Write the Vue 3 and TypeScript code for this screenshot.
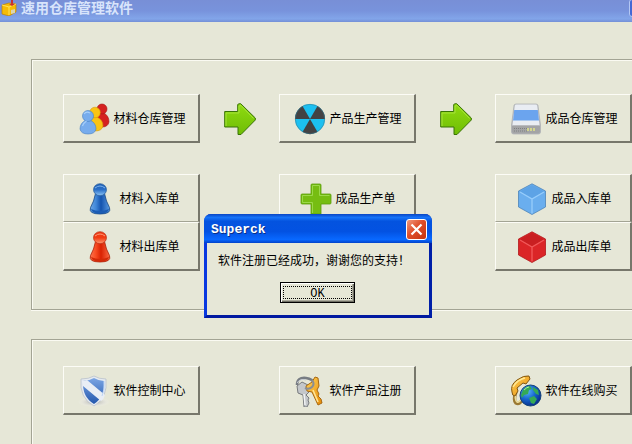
<script setup lang="ts">
import { ref } from 'vue'

interface Action {
  icon: string
  label: string
}

const stages: Action[] = [
  { icon: 'people', label: '材料仓库管理' },
  { icon: 'fan', label: '产品生产管理' },
  { icon: 'drive', label: '成品仓库管理' },
]

const documents: Action[][] = [
  [
    { icon: 'pawn-blue', label: '材料入库单' },
    { icon: 'pawn-red', label: '材料出库单' },
  ],
  [{ icon: 'plus', label: '成品生产单' }],
  [
    { icon: 'cube-blue', label: '成品入库单' },
    { icon: 'cube-red', label: '成品出库单' },
  ],
]

const tools: Action[] = [
  { icon: 'shield', label: '软件控制中心' },
  { icon: 'keys', label: '软件产品注册' },
  { icon: 'phone', label: '软件在线购买' },
]

const dialogOpen = ref(true)
</script>

<template>
  <div class="window">
    <svg class="sprites" aria-hidden="true">
      <defs>
        <linearGradient id="g-arrow" x1="0" y1="0" x2="0" y2="1">
          <stop offset="0" stop-color="#8fdb10" />
          <stop offset="1" stop-color="#6fbd05" />
        </linearGradient>
        <linearGradient id="g-blue" x1="0" y1="0" x2="1" y2="0">
          <stop offset="0" stop-color="#6aa6e6" />
          <stop offset="0.3" stop-color="#3f86d8" />
          <stop offset="0.55" stop-color="#1453ae" />
          <stop offset="1" stop-color="#5b9ce2" />
        </linearGradient>
        <linearGradient id="g-blue-head" x1="0" y1="0" x2="0" y2="1">
          <stop offset="0" stop-color="#1f5fb4" />
          <stop offset="0.5" stop-color="#2a6fc8" />
          <stop offset="1" stop-color="#8cc4f6" />
        </linearGradient>
        <linearGradient id="g-red" x1="0" y1="0" x2="1" y2="0">
          <stop offset="0" stop-color="#fb7450" />
          <stop offset="0.3" stop-color="#f84a20" />
          <stop offset="0.55" stop-color="#d92203" />
          <stop offset="1" stop-color="#fb6c45" />
        </linearGradient>
        <linearGradient id="g-red-head" x1="0" y1="0" x2="0" y2="1">
          <stop offset="0" stop-color="#ec3a16" />
          <stop offset="0.5" stop-color="#f23c12" />
          <stop offset="1" stop-color="#ff9a74" />
        </linearGradient>
        <linearGradient id="g-shield" x1="0" y1="0" x2="0" y2="1">
          <stop offset="0" stop-color="#7ba5e4" />
          <stop offset="1" stop-color="#2358ad" />
        </linearGradient>
        <linearGradient id="g-gold" x1="0" y1="0" x2="1" y2="1">
          <stop offset="0" stop-color="#ffd25a" />
          <stop offset="1" stop-color="#e58a06" />
        </linearGradient>
        <radialGradient id="g-globe" cx="0.35" cy="0.3" r="0.75">
          <stop offset="0" stop-color="#59b8f5" />
          <stop offset="0.5" stop-color="#1767cf" />
          <stop offset="1" stop-color="#062a86" />
        </radialGradient>
        <radialGradient id="g-shadow">
          <stop offset="0" stop-color="#b9bbb4" />
          <stop offset="0.6" stop-color="#deded6" />
          <stop offset="1" stop-color="#f1f1e9" stop-opacity="0" />
        </radialGradient>
      </defs>

      <symbol id="people" viewBox="0 0 32 32">
        <g stroke="#a31715" stroke-width=".6" fill="#d52220">
          <path d="M17 19q0-6 5-9h4q5 3 5 9q-1 5-7 5t-7-5z" />
          <circle cx="24" cy="6" r="5" />
        </g>
        <g stroke="#d39a06" stroke-width=".6" fill="#f9c414">
          <path d="M9 23q0-6 6-9h4q6 3 6 9q-1 5-8 5t-8-5z" />
          <circle cx="17" cy="9.500" r="5.300" />
        </g>
        <g stroke="#477fc1" stroke-width=".6" fill="#77aced">
          <path d="M2 26q0-6 6-9h4q6 3 6 9q-1 5-8 5t-8-5z" />
          <circle cx="10" cy="13" r="5.500" />
        </g>
        <path d="M6 11q2-3 6-1M4.500 23q1-3 4-5" stroke="#a7cffa" stroke-width="1.200" fill="none" />
      </symbol>

      <symbol id="fan" viewBox="0 0 32 32">
        <circle cx="16" cy="16" r="15" fill="#1cc0f1" />
        <g fill="#424244">
          <path d="M16 16L1 16A15 15 0 0 1 8.500 3z" />
          <path d="M16 16L23.500 3A15 15 0 0 1 31 16z" />
          <path d="M16 16L23.500 29A15 15 0 0 1 8.500 29z" />
        </g>
        <circle cx="16" cy="16" r="14.700" fill="none" stroke="#3b7285" stroke-width=".5" />
      </symbol>

      <symbol id="drive" viewBox="0 0 32 32">
        <path d="M4 2.500q.3-1.500 2-1.500h20q1.700 0 2 1.500L30.500 22v7q0 2-2 2h-25q-2 0-2-2v-7z" fill="#b9bbbf" stroke="#a3a6ac" stroke-width=".6" />
        <path d="M4.800 2.800q.2-1.200 1.500-1.200h19.400q1.300 0 1.500 1.200L29.500 22h-27z" fill="#e9edf3" />
        <path d="M4.200 7h23.600l1.200 10.500H3z" fill="#6ba4ee" />
        <path d="M2 23h28v5.500q0 2-2 2H4q-2 0-2-2z" fill="#a3a4a6" />
        <path d="M4 25.500h13M4 28h13" stroke="#7f8082" stroke-dasharray="1 1" />
        <path d="M17 26.500h9" stroke="#d3d68e" stroke-width="3" stroke-dasharray="2 1" />
      </symbol>

      <symbol id="pawn-blue" viewBox="0 0 32 32">
        <path d="M11.500 10.500h9q1.500 8 5 14q2.300 6.500-9.500 6.500T6.500 24.500q3.500-6 5-14z" fill="url(#g-blue)" stroke="#164884" stroke-width=".8" />
        <path d="M7 26q9 4 18 0q-1 4.500-9 4.500T7 26z" fill="#1c5cb4" />
        <ellipse cx="16" cy="6.700" rx="6.500" ry="6" fill="url(#g-blue-head)" stroke="#265b99" stroke-width=".7" />
        <path d="M11 5q5-4 10 0" stroke="#7db3ec" fill="none" />
      </symbol>

      <symbol id="pawn-red" viewBox="0 0 32 32">
        <path d="M11.500 10.500h9q1.500 8 5 14q2.300 6.500-9.500 6.500T6.500 24.500q3.500-6 5-14z" fill="url(#g-red)" stroke="#a92108" stroke-width=".8" />
        <path d="M7 26q9 4 18 0q-1 4.500-9 4.500T7 26z" fill="#d32a08" />
        <ellipse cx="16" cy="6.700" rx="6.500" ry="6" fill="url(#g-red-head)" stroke="#b92d12" stroke-width=".7" />
        <path d="M11 5q5-4 10 0" stroke="#ff9a78" fill="none" />
      </symbol>

      <symbol id="plus" viewBox="0 0 32 32">
        <path d="M12 1h8q1 0 1 1v9h9q1 0 1 1v8q0 1-1 1h-9v10h-10V21H2q-1 0-1-1v-8q0-1 1-1h9V2q0-1 1-1z" fill="#76bd12" stroke="#5b9d0a" stroke-width=".8" />
        <path d="M12.500 30V19.500H2.500v-7h10V2.500h7v10h10" stroke="#9bd94a" fill="none" />
      </symbol>

      <symbol id="cube-blue" viewBox="0 0 32 32">
        <path d="M16 .8L29.500 8v16L16 31.500 2.500 24V8z" fill="#6aaeee" stroke="#4d84b9" stroke-width=".8" stroke-linejoin="round" />
        <path d="M16 2L28.500 8.500 16 15 3.500 8.500z" fill="#5da3e6" />
        <path d="M4 9l12 7 12-7M16 16v14.500" stroke="#97cdfb" stroke-width="1.300" fill="none" />
      </symbol>

      <symbol id="cube-red" viewBox="0 0 32 32">
        <path d="M16 .8L29.500 8v16L16 31.500 2.500 24V8z" fill="#db2527" stroke="#b3191c" stroke-width=".8" stroke-linejoin="round" />
        <path d="M16 2L28.500 8.500 16 15 3.500 8.500z" fill="#c91f21" />
        <path d="M4 9l12 7 12-7M16 16v14.500" stroke="#f1595a" stroke-width="1.300" fill="none" />
      </symbol>

      <symbol id="shield" viewBox="0 0 32 32">
        <ellipse cx="16" cy="27" rx="16" ry="5" fill="url(#g-shadow)" />
        <path d="M3 4q8 0 13-3q5 3 12 3q2 19-12 27Q1 23 3 4z" fill="#e5eaf0" stroke="#b3bcc8" stroke-width=".7" />
        <path d="M5 6q6 0 11-3q5 3 10 3q1 16-10 23Q4 22 5 6z" fill="url(#g-shield)" />
        <path d="M4 6q3 0 5-1l18 15q-1 4-4 6L5 11z" fill="#e9eef5" />
        <path d="M26 6q1 9-2 15" stroke="#bdd5f4" fill="none" />
      </symbol>

      <symbol id="keys" viewBox="0 0 32 32">
        <path d="M3 10q0-8 9-7q7 1 9 6" fill="none" stroke="#777c83" stroke-width="2.600" />
        <path d="M3 8q3-5 9-3" fill="none" stroke="#c5cbd3" />
        <path d="M3 11l5-4 6 3 1 7-3 3 3 3-1 2 1 3-2 4h-3l-1-12-5-2z" fill="#c4c7ca" stroke="#777a7d" />
        <path d="M10 19l1 11" stroke="#f1f3f4" stroke-width="1.500" />
        <path d="M12 11l6-4 3-5 3 1 1 8-2 4 2 4-1 2 3 3 1 4-4 2-6-13-5-1z" fill="url(#g-gold)" stroke="#a86811" />
        <path d="M19 15l5 12" stroke="#ffe69a" stroke-width="1.500" />
        <path d="M11 13q4 2 7-1q3-3 0-7" fill="none" stroke="#8a8e93" stroke-width="2" />
      </symbol>

      <symbol id="phone" viewBox="0 0 32 32">
        <path d="M6 17q-3 8 0 11q4 2 7-5" fill="none" stroke="#9b7932" stroke-width="3.500" />
        <path d="M6 17q-2 7 1 10q2 1 5-4" fill="none" stroke="#eadb9c" stroke-width="1.500" />
        <path d="M2 17q-2-7 5-12q7-5 12-4l1 3-4 5-3-1-6 5 1 3-3 5q-3 0-3-4z" fill="url(#g-gold)" stroke="#805715" />
        <path d="M3 12q4-7 12-9" fill="none" stroke="#ffe895" stroke-width="1.500" />
        <circle cx="20.500" cy="20.500" r="10.500" fill="url(#g-globe)" stroke="#11417a" />
        <path d="M13 15q3-4 7-4l2 3-3 1-1 4-4 1-2 3-1-3zM23 12l5 3 1 5-3-1-3-4zM19 23l5-2 3 3-3 5-3-1z" fill="#35a955" />
        <path d="M14 15q3-3 5-3" stroke="#a8ed92" fill="none" />
      </symbol>

      <symbol id="arrow" viewBox="0 0 32 32">
        <path d="M.7 8.500h13V1.500q1-1 3-.8L31.300 15v2L17 31.500h-3V24H.7z" fill="url(#g-arrow)" stroke="#397306" stroke-linejoin="round" />
        <path d="M2 23V10h13V3l2-.5L29.500 15.500" fill="none" stroke="#a5e23a" stroke-width="1" />
      </symbol>

      <symbol id="box" viewBox="0 0 16 16">
        <path d="M1 5l7-2 7 1v8l-7 4-7-2z" fill="#f5bc07" stroke="#bb8204" stroke-width=".7" />
        <path d="M1 5l7 2 7-3M8 7v8" stroke="#ffe45a" fill="none" />
        <path d="M10 0h2v4h2l-3 2-3-2h2z" fill="#c93131" />
        <path d="M10 10l4-1v4l-4 1z" fill="#d9d4b2" />
      </symbol>
    </svg>

    <header class="titlebar">
      <svg class="app-icon" aria-hidden="true"><use href="#box" /></svg>
      <h1>速用仓库管理软件</h1>
      <button class="minimize" type="button" aria-label="最小化"></button>
    </header>

    <main>
      <section class="group">
        <div class="row">
          <template v-for="(item, i) in stages" :key="item.label">
            <svg v-if="i > 0" class="icon arrow" aria-hidden="true"><use href="#arrow" /></svg>
            <button class="action" type="button">
              <svg class="icon" aria-hidden="true"><use :href="'#' + item.icon" /></svg>
              <span>{{ item.label }}</span>
            </button>
          </template>
        </div>
        <div class="row">
          <template v-for="(stack, i) in documents" :key="i">
            <span v-if="i > 0"></span>
            <div class="stack">
              <button v-for="item in stack" :key="item.label" class="action" type="button">
                <svg class="icon" aria-hidden="true"><use :href="'#' + item.icon" /></svg>
                <span>{{ item.label }}</span>
              </button>
            </div>
          </template>
        </div>
      </section>

      <section class="group tools">
        <div class="row">
          <template v-for="(item, i) in tools" :key="item.label">
            <span v-if="i > 0"></span>
            <button class="action" type="button">
              <svg class="icon" aria-hidden="true"><use :href="'#' + item.icon" /></svg>
              <span>{{ item.label }}</span>
            </button>
          </template>
        </div>
      </section>
    </main>

    <div v-if="dialogOpen" class="dialog" role="dialog" aria-labelledby="dialog-title">
      <div class="dialog-bar">
        <h2 id="dialog-title">Superck</h2>
        <button class="close" type="button" aria-label="关闭" @click="dialogOpen = false">
          <svg viewBox="0 0 19 19" aria-hidden="true">
            <path d="M4.500 4.500l10 10M14.500 4.500l-10 10" stroke="#fff" stroke-width="2.200" />
          </svg>
        </button>
      </div>
      <div class="dialog-body">
        <p>软件注册已经成功，谢谢您的支持！</p>
        <button class="ok" type="button" @click="dialogOpen = false"><span>OK</span></button>
      </div>
    </div>
  </div>
</template>

<style>
body {
  margin: 0;
  background: #e6e7d7;
}
</style>

<style scoped>
.window {
  position: relative;
  display: flex;
  flex-direction: column;
  box-sizing: border-box;
  height: 100vh;
  overflow: hidden;
  background: #e6e7d7;
  color: #000;
  font: 12px/16px "Liberation Sans", "Noto Sans CJK SC", sans-serif;
}
.sprites {
  position: absolute;
  width: 0;
  height: 0;
}
h1,
h2,
p {
  margin: 0;
}
button {
  box-sizing: border-box;
  padding: 0;
  border: 0;
  font: inherit;
  color: inherit;
}
.titlebar {
  display: flex;
  flex: none;
  align-items: flex-start;
  gap: 4px;
  height: 22px;
  padding-left: 1px;
  overflow: hidden;
  background: linear-gradient(#788fd6, #7893dc 50%, #82a5e9 85%, #7490d7);
}
.app-icon {
  width: 16px;
  height: 16px;
}
h1 {
  color: #d8e4fb;
  font-size: 14px;
  line-height: 16px;
  font-weight: bold;
}
.minimize {
  flex: none;
  width: 21px;
  height: 18px;
  margin: -1px -18px 0 auto;
  border: 1px solid #b4c8f4;
  border-radius: 3px;
  background: #4568d4;
}
main {
  display: flex;
  flex: 1;
  flex-direction: column;
  gap: 29px;
  padding: 37px 0 0 31px;
}
.group {
  display: flex;
  flex-direction: column;
  gap: 31px;
  padding: 34px 0 38px 31px;
  border: solid #a3a494;
  border-width: 1px 0 1px 1px;
  box-shadow: inset 1px 1px #fafaf2, 0 1px #fafaf2;
}
.tools {
  flex: 1;
  padding: 26px 0 0 31px;
  border-bottom: 0;
}
.row {
  display: grid;
  grid-template-columns: minmax(137px, 1fr) 79px minmax(137px, 1fr) 79px minmax(137px, 1fr);
  align-items: start;
}
.stack {
  display: flex;
  flex-direction: column;
}
.action {
  display: flex;
  align-items: center;
  justify-content: center;
  gap: 3px;
  height: 49px;
  padding: 1px 0 0 2px;
  background: #e6e7d7;
  border: solid;
  border-width: 1px 2px 2px 1px;
  border-color: #fcfcf6 #77776b #77776b #fcfcf6;
  white-space: nowrap;
}
.action span {
  padding-top: 1px;
}
.stack .action:not(:last-child) {
  height: 48px;
  border-bottom: 1px solid #a3a494;
}
.icon {
  flex: none;
  width: 32px;
  height: 32px;
}
.arrow {
  align-self: center;
  justify-self: center;
}
.dialog {
  position: absolute;
  top: 214px;
  left: calc(50% - 112px);
  box-sizing: border-box;
  width: 228px;
  border: solid;
  border-width: 0 3px 3px;
  border-color: #0831d9 #001fa8 #0019a0 #0838e0;
  border-radius: 7px 7px 0 0;
  background: #0648dc;
}
.stack .action:only-child {
  height: 49px;
  border-bottom: 2px solid #77776b;
}
.dialog-bar {
  display: flex;
  align-items: center;
  justify-content: space-between;
  height: 29px;
  margin: 0 -3px;
  padding: 2px 5px 0 7px;
  box-sizing: border-box;
  border-radius: 7px 7px 0 0;
  background: linear-gradient(#0a46c4, #1673f8 12%, #0453df 25%, #0352e2 60%, #0868ff 88%, #0242ca);
}
h2 {
  color: #fff;
  font: bold 13px/20px "Liberation Mono", monospace;
  text-shadow: 1px 1px #0b2f86;
}
.close {
  width: 21px;
  height: 21px;
  border: 1px solid #fff;
  border-radius: 3px;
  background: linear-gradient(135deg, #f09a80, #df4e2a 45%, #c5330e);
}
.close svg {
  display: block;
  width: 19px;
  height: 19px;
}
.dialog-body {
  display: flex;
  flex-direction: column;
  align-items: center;
  gap: 13px;
  padding: 10px 12px 12px 11px;
  background: #e6e7d7;
}
.dialog-body p {
  align-self: stretch;
  white-space: nowrap;
}
.ok {
  width: 75px;
  height: 21px;
  padding: 2px;
  border: 1px solid #000;
  background: #e6e7d7;
  box-shadow: inset 1px 1px #fff, inset -1px -1px #6f6f64, inset -2px -2px #aaa99b;
  font: 12px/14px "Liberation Mono", monospace;
}
.ok span {
  display: block;
  height: 13px;
  box-sizing: border-box;
  border: 1px dotted #000;
}
</style>
